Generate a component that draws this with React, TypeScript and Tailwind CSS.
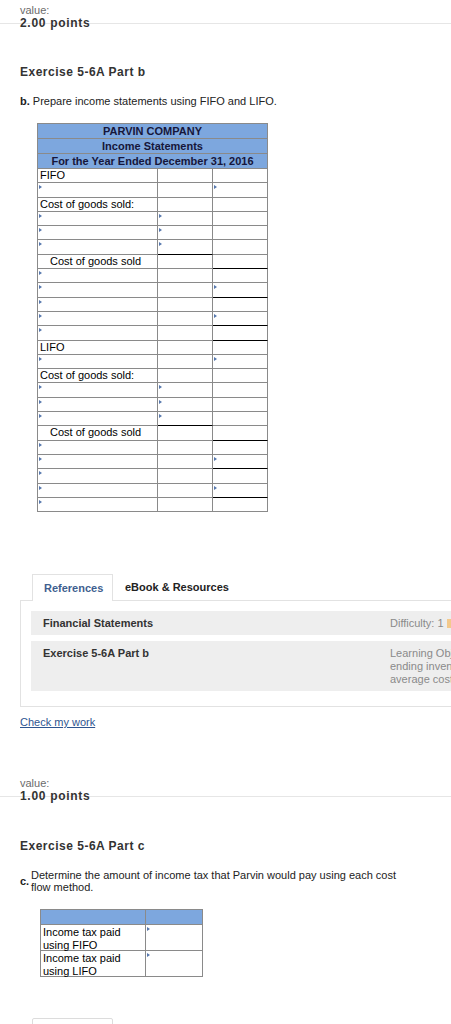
import React from 'react';

type Cell = { text?: string; arrow?: boolean; indent?: boolean; under?: boolean };
type Row = [Cell, Cell, Cell];

const A: Cell = { arrow: true };
const E: Cell = {};

const section = (label: string, lastUnder: boolean): Row[] => [
  [{ text: label }, E, E],
  [A, E, A],
  [{ text: 'Cost of goods sold:' }, E, E],
  [A, A, E],
  [A, A, E],
  [A, { arrow: true, under: true }, E],
  [{ text: 'Cost of goods sold', indent: true }, E, { under: true }],
  [A, E, E],
  [A, E, { arrow: true, under: true }],
  [A, E, E],
  [A, E, { arrow: true, under: true }],
  [A, E, lastUnder ? { under: true } : E],
];

const rows: Row[] = [...section('FIFO', true), ...section('LIFO', false)];

const colW = ['w-[120px]', 'w-[55px]', 'w-[55px]'];

const Arrow = () => (
  <span className="mt-[2px] ml-px block h-0 w-0 border-y-[2px] border-l-[3px] border-y-transparent border-l-[#5677ad]" />
);

const PointsHeader = ({ points }: { points: string }) => (
  <div className="border-b border-[#e6e6e6]">
    <div className="pl-5 pt-[4px] text-[11px] leading-[13px] text-[#6b6b6b]">value:</div>
    <div className="h-[6px] pl-5 text-[12px] font-bold leading-[13px] tracking-[0.7px] text-[#333]">{points}</div>
  </div>
);

export default function App() {
  return (
    <div className="w-[451px] overflow-hidden bg-white pb-10 font-['Liberation_Sans',Arial,sans-serif] text-[11px] text-[#222]">
      <PointsHeader points="2.00 points" />

      <div className="mt-[42px] pl-5 text-[12px] font-bold leading-[13px] tracking-[0.5px] text-[#333]">Exercise 5-6A Part b</div>
      <div className="mt-[16px] pl-5 leading-[13px] text-[#222]">
        <b>b.</b> Prepare income statements using FIFO and LIFO.
      </div>

      {/* income statement grid */}
      <div className="ml-[37px] mt-[15px] w-[231px] border-l border-t border-[#8a8a8a]">
        {['PARVIN COMPANY', 'Income Statements', 'For the Year Ended December 31, 2016'].map((t) => (
          <div
            key={t}
            className="flex h-[15px] items-center justify-center border-b border-r border-[#8a8a8a] bg-[#7da7de] text-[11px] font-bold text-[#16163a]"
          >
            {t}
          </div>
        ))}
        {rows.map((r, i) => (
          <div key={i} className="flex h-[14.3px]">
            {r.map((c, j) => (
              <div
                key={j}
                className={`${colW[j]} flex border-r border-b ${c.under ? 'border-r-[#8a8a8a] border-b-black' : 'border-[#8a8a8a]'} ${c.text ? 'items-center' : 'items-start'} text-black`}
              >
                {c.arrow && <Arrow />}
                {c.text && (
                  <span className={`${c.indent ? 'pl-[12px]' : 'pl-[2px]'} whitespace-nowrap leading-none`}>{c.text}</span>
                )}
              </div>
            ))}
          </div>
        ))}
      </div>

      {/* references tabs */}
      <div className="mt-[62px] flex pl-[32px]">
        <div className="relative z-10 -mb-px flex h-[27px] w-[81px] items-center border border-b-0 border-[#e2e2e2] bg-white pl-[11px] font-bold text-[#3f5f8f]">
          References
        </div>
        <div className="flex h-[26px] items-center pl-[12px] font-bold text-[#222]">eBook &amp; Resources</div>
      </div>
      <div className="ml-5 w-[640px] border border-[#e2e2e2] px-[10px] pb-[15px] pt-[10px]">
        <div className="flex h-[24px] items-center bg-[#eeeeee]">
          <div className="w-[359px] pl-[12px] font-bold text-[#333]">Financial Statements</div>
          <div className="flex items-center whitespace-nowrap text-[#8a8a8a]">
            Difficulty: 1<span className="ml-[3px] inline-block h-[9px] w-[8px] bg-[#f3c98c]" />
          </div>
        </div>
        <div className="mt-[6px] flex h-[50px] bg-[#eeeeee] pt-[6px]">
          <div className="w-[359px] pl-[12px] font-bold leading-[13px] text-[#333]">Exercise 5-6A Part b</div>
          <div className="whitespace-nowrap leading-[13px] text-[#8a8a8a]">
            <div>Learning Objective: 05-A1 Compute</div>
            <div>ending inventory using weighted</div>
            <div>average cost.</div>
          </div>
        </div>
      </div>

      <div className="mt-[9px] pl-5 leading-[13px]">
        <span className="text-[#2e5590] underline">Check my work</span>
      </div>

      <div className="mt-[44px]">
        <PointsHeader points="1.00 points" />
      </div>

      <div className="mt-[43px] pl-5 text-[12px] font-bold leading-[13px] tracking-[0.5px] text-[#333]">Exercise 5-6A Part c</div>
      <div className="mt-[16px] flex items-center pl-5 leading-[12px]">
        <b className="w-[11px]">c.</b>
        <div>
          Determine the amount of income tax that Parvin would pay using each cost
          <br />
          flow method.
        </div>
      </div>

      <div className="ml-[40px] mt-[16px] w-[163px] border-l border-t border-[#8a8a8a]">
        <div className="flex h-[15px] bg-[#7da7de]">
          <div className="w-[106px] border-b border-r border-[#8a8a8a]" />
          <div className="w-[57px] border-b border-r border-[#8a8a8a]" />
        </div>
        {['FIFO', 'LIFO'].map((m) => (
          <div key={m} className="flex h-[26px]">
            <div className="w-[106px] border-b border-r border-[#8a8a8a] pl-[2px] pt-[1px] leading-[12.5px] text-black">
              Income tax paid
              <br />
              using {m}
            </div>
            <div className="flex w-[57px] items-start border-b border-r border-[#8a8a8a]">
              <Arrow />
            </div>
          </div>
        ))}
      </div>

      <div className="ml-[32px] mt-[41px] h-[30px] w-[81px] rounded-[2px] border border-[#dcdcdc]" />
    </div>
  );
}
